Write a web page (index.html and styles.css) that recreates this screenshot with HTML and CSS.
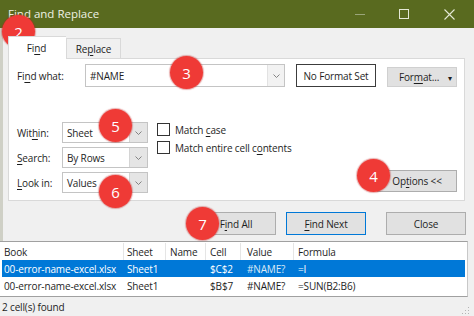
FILE: index.html
```html
<!DOCTYPE html>
<html lang="en">
<head>
    <meta charset="UTF-8">
    <title>Find and Replace</title>
    <link rel="stylesheet" href="styles.css">
</head>
<body>
    <div class="window">
        <!-- Title bar -->
        <div class="titlebar">
            <span class="title">Find and Replace</span>
            <div class="controls">
                <svg class="ctl min" width="10" height="10" viewBox="0 0 10 10"><path d="M0 5.5h10" stroke="#9aa57a" stroke-width="1"/></svg>
                <svg class="ctl max" width="10" height="10" viewBox="0 0 10 10"><rect x="0.5" y="0.5" width="9" height="9" fill="none" stroke="#e4e8d6" stroke-width="1"/></svg>
                <svg class="ctl close" width="11" height="11" viewBox="0 0 11 11"><path d="M0.5 0.5l10 10M10.5 0.5l-10 10" stroke="#e4e8d6" stroke-width="1.1"/></svg>
            </div>
        </div>

        <div class="upper">
            <!-- Tabs -->
            <div class="tabs">
                <div class="tab active"><span>Fi<u>n</u>d</span></div>
                <div class="tab"><span>Re<u>p</u>lace</span></div>
            </div>

            <!-- Tab panel -->
            <div class="panel">
                <div class="find-row">
                    <span class="label wide">Fi<u>n</u>d what:</span>
                    <div class="combo find-combo">
                        <span class="combo-text">#NAME</span>
                        <span class="combo-arrow"><svg width="7" height="4" viewBox="0 0 7 4"><path d="M0.5 0.5l3 3 3-3" fill="none" stroke="#777" stroke-width="0.9"/></svg></span>
                    </div>
                    <div class="format-preview">No Format Set</div>
                    <div class="btn format-btn"><span>For<u>m</u>at...</span> <span class="tri">&#9662;</span></div>
                </div>

                <div class="lower">
                    <div class="fields">
                        <span class="label">Wit<u>h</u>in:</span>
                        <div class="combo select"><span class="combo-text">Sheet</span><span class="combo-arrow grey"><svg width="7" height="4" viewBox="0 0 7 4"><path d="M0.5 0.5l3 3 3-3" fill="none" stroke="#777" stroke-width="0.9"/></svg></span></div>
                        <span class="label"><u>S</u>earch:</span>
                        <div class="combo select"><span class="combo-text">By Rows</span><span class="combo-arrow grey"><svg width="7" height="4" viewBox="0 0 7 4"><path d="M0.5 0.5l3 3 3-3" fill="none" stroke="#777" stroke-width="0.9"/></svg></span></div>
                        <span class="label"><u>L</u>ook in:</span>
                        <div class="combo select"><span class="combo-text">Values</span><span class="combo-arrow grey"><svg width="7" height="4" viewBox="0 0 7 4"><path d="M0.5 0.5l3 3 3-3" fill="none" stroke="#777" stroke-width="0.9"/></svg></span></div>
                    </div>

                    <div class="checks">
                        <label class="check"><span class="box"></span><span>Match <u>c</u>ase</span></label>
                        <label class="check"><span class="box"></span><span>Match entire cell c<u>o</u>ntents</span></label>
                    </div>

                    <div class="btn options-btn"><span>Op<u>t</u>ions &lt;&lt;</span></div>
                </div>
            </div>

            <!-- Action buttons -->
            <div class="actions">
                <div class="btn action"><span>F<u>i</u>nd All</span></div>
                <div class="btn action default"><span><u>F</u>ind Next</span></div>
                <div class="btn action close-btn">Close</div>
            </div>
        </div>

        <!-- Results list -->
        <div class="results">
            <div class="row head">
                <span class="c book">Book</span>
                <span class="c sheet">Sheet</span>
                <span class="c name">Name</span>
                <span class="c cell">Cell</span>
                <span class="c value">Value</span>
                <span class="c formula">Formula</span>
            </div>
            <div class="row selected">
                <span class="c book">00-error-name-excel.xlsx</span>
                <span class="c sheet">Sheet1</span>
                <span class="c name"></span>
                <span class="c cell">$C$2</span>
                <span class="c value">#NAME?</span>
                <span class="c formula">=I</span>
            </div>
            <div class="row">
                <span class="c book">00-error-name-excel.xlsx</span>
                <span class="c sheet">Sheet1</span>
                <span class="c name"></span>
                <span class="c cell">$B$7</span>
                <span class="c value">#NAME?</span>
                <span class="c formula">=SUN(B2:B6)</span>
            </div>
        </div>

        <div class="status">
            <span>2 cell(s) found</span>
            <svg class="grip" width="8" height="8" viewBox="0 0 8 8"><g fill="#b4b4b4"><rect x="6" y="0" width="1" height="1"/><rect x="3" y="3" width="1" height="1"/><rect x="6" y="3" width="1" height="1"/><rect x="0" y="6" width="1" height="1"/><rect x="3" y="6" width="1" height="1"/><rect x="6" y="6" width="1" height="1"/></g></svg>
        </div>

        <!-- Numbered callouts over the dialog -->
        <span class="marker m2">2</span>
        <span class="marker m3">3</span>
        <span class="marker m4">4</span>
        <span class="marker m5">5</span>
        <span class="marker m6">6</span>
        <span class="marker m7">7</span>
    </div>
</body>
</html>
```

FILE: styles.css
```css
/* Page */
body {
    margin: 0;
    font-family: "Open Sans", "Noto Sans", sans-serif;
    font-size: 10px;
    letter-spacing: -0.15px;
    color: #1e1e1e;
    background: #f0f0f0;
}

u {
    text-decoration-thickness: 1px;
    text-underline-offset: 2px;
}

.window {
    position: relative;
    width: 474px;
    height: 316px;
    overflow: hidden;
    background: #f0f0f0;
}

/* Title bar */
.titlebar {
    height: 28px;
    background: #596a1f;
    display: flex;
    align-items: center;
    padding-left: 8px;
}

.title {
    color: #eef1e4;
    font-size: 11.5px;
    letter-spacing: 0;
    margin-top: -1px;
}

.controls {
    margin-left: auto;
    display: flex;
    align-items: center;
}

.ctl.min { margin-right: 34px; }
.ctl.max { margin-right: 35px; }
.ctl.close { margin-right: 19px; }

/* Upper dialog area */
.upper {
    box-sizing: border-box;
    border-left: 3px solid #cfd0c6;
    padding: 8px 9px 0 5px;
    height: 213px;
}

.tabs {
    display: flex;
    align-items: flex-end;
    height: 22px;
}

.tab {
    box-sizing: border-box;
    height: 20px;
    width: 55px;
    border: 1px solid #d9d9d9;
    border-bottom: none;
    background: #f0f0f0;
    display: flex;
    align-items: center;
    justify-content: center;
}

.tab.active {
    width: 58px;
    height: 23px;
    background: #fff;
    position: relative;
    z-index: 1;
    margin-bottom: -1px;
    border-right: none;
    padding-right: 2px;
}

/* Panel */
.panel {
    box-sizing: border-box;
    height: 143px;
    background: #fff;
    border: 1px solid #d9d9d9;
    padding: 5px 7px 0 8px;
    display: flex;
    flex-direction: column;
}

.find-row {
    display: flex;
    align-items: center;
    height: 23px;
}

.label {
    white-space: nowrap;
}

.label.wide {
    width: 68px;
}

.combo {
    display: flex;
    border: 1px solid #c4c4c4;
    background: #fff;
    box-sizing: border-box;
}

.combo-text {
    flex: 1;
    padding-left: 4px;
    display: flex;
    align-items: center;
}

.combo-arrow {
    width: 16px;
    display: flex;
    align-items: center;
    justify-content: center;
    border-left: 1px solid #e2e2e2;
    background: #f2f2f2;
}

.combo-arrow.grey {
    width: 17px;
    background: #e5e5e5;
    border-left: 1px solid #d4d4d4;
}

.find-combo {
    width: 200px;
    height: 23px;
}

.format-preview {
    margin-left: 11px;
    width: 80px;
    height: 23px;
    box-sizing: border-box;
    border: 1px solid #3c3c3c;
    display: flex;
    align-items: center;
    justify-content: center;
}

.btn {
    box-sizing: border-box;
    border: 1px solid #adadad;
    background: #e1e1e1;
    display: flex;
    align-items: center;
    justify-content: center;
}

.format-btn {
    margin-left: 11px;
    width: 70px;
    height: 20px;
    margin-top: 3px;
    border-color: #d0d0d0;
    justify-content: flex-end;
    padding-right: 4px;
}

.format-btn .tri {
    font-size: 8px;
    margin-left: 9px;
}

/* Within / Search / Look in */
.lower {
    display: flex;
    align-items: flex-end;
    margin-top: 35px;
}

.fields {
    display: grid;
    grid-template-columns: 45px 86px;
    row-gap: 4px;
    align-items: center;
}

.select {
    height: 21px;
}

.checks {
    align-self: flex-start;
    margin-left: 9px;
    margin-top: 1px;
    display: flex;
    flex-direction: column;
    gap: 5px;
}

.check {
    display: flex;
    align-items: center;
    height: 13px;
}

.check .box {
    width: 13px;
    height: 13px;
    box-sizing: border-box;
    border: 1px solid #333;
    background: #fff;
    margin-right: 5px;
}

.options-btn {
    margin-left: auto;
    width: 80px;
    height: 22px;
    margin-bottom: 1px;
}

/* Find All / Find Next / Close */
.actions {
    display: flex;
    justify-content: flex-end;
    gap: 10px;
    margin-top: 11px;
}

.action {
    width: 80px;
    height: 23px;
}

.action.default {
    border-color: #0078d7;
}

.action.close-btn {
    margin-left: 10px;
    margin-right: -1px;
}

/* Results list */
.results {
    background: #fff;
    border-top: 1px solid #a0a0a0;
    border-bottom: 1px solid #a0a0a0;
    border-right: 1px solid #c8c8c8;
    width: 467px;
    height: 53px;
    padding-top: 1px;
}

.row {
    display: flex;
    height: 17px;
    align-items: center;
    margin: 0 2px;
    white-space: nowrap;
}

.row.head {
    height: 17px;
    margin: 0;
}

.row.head .c {
    border-right: 1px solid #e5e5e5;
    height: 17px;
    display: flex;
    align-items: center;
}

.row.selected {
    background: #0078d7;
    color: #fff;
}

.c {
    box-sizing: border-box;
    padding-left: 4px;
    flex-shrink: 0;
}

.c.book { width: 124px; }
.c.sheet { width: 42px; padding-left: 3px; }
.c.name { width: 40px; }
.c.cell { width: 35px; }
.c.value { width: 53px; padding-left: 6px; }
.c.formula { flex: 1; border-right: none !important; }

.row:not(.head) .c.book { width: 122px; padding-left: 2px; }
.row.selected .c.value { color: #dce9f6; }

/* Status bar */
.status {
    height: 19px;
    display: flex;
    align-items: center;
    padding-left: 2px;
    padding-right: 4px;
}

.grip {
    margin-left: auto;
    margin-top: 8px;
}

/* Red numbered callouts */
.marker {
    position: absolute;
    width: 33px;
    height: 33px;
    border-radius: 50%;
    background: #ef3a36;
    box-shadow: 0 0 1px 1px rgba(190, 30, 30, 0.35);
    color: #fff;
    font-size: 15px;
    letter-spacing: 0;
    display: flex;
    align-items: center;
    justify-content: center;
}

.m2 { left: 2px; top: 15px; }
.m3 { left: 170px; top: 56px; }
.m4 { left: 357px; top: 159px; }
.m5 { left: 99px; top: 109px; }
.m6 { left: 99px; top: 175px; }
.m7 { left: 186px; top: 207px; }
```
